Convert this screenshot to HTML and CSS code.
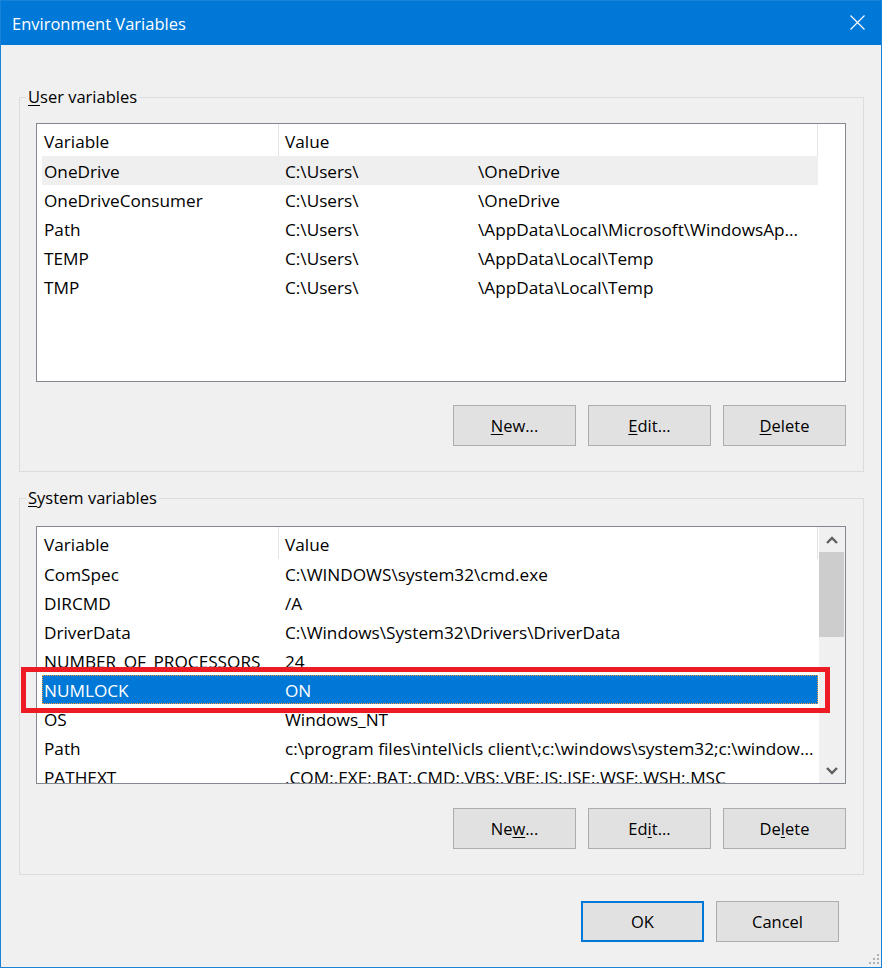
FILE: index.html
```html
<!DOCTYPE html>
<html>
<head>
<meta charset="utf-8">
<title>Environment Variables</title>
<link rel="stylesheet" href="styles.css">
</head>
<body>
<div class="window">
  <div class="titlebar">
    <span class="title">Environment Variables</span>
    <svg class="close" width="15" height="15" viewBox="0 0 15 15"><path d="M0.5 0.5 L14.5 14.5 M14.5 0.5 L0.5 14.5" stroke="#fff" stroke-width="1.1" fill="none"/></svg>
  </div>
  <div class="content">
    <fieldset class="group">
      <legend><u>U</u>ser variables</legend>
      <div class="list list-user">
        <div class="list-main">
          <div class="header">
            <div class="hcell h1">Variable</div>
            <div class="hcell h2">Value</div>
          </div>
          <div class="rows">
            <div class="row hover"><div class="c1">OneDrive</div><div class="c2"><span class="seg">C:\Users\</span>\OneDrive</div></div>
            <div class="row"><div class="c1">OneDriveConsumer</div><div class="c2"><span class="seg">C:\Users\</span>\OneDrive</div></div>
            <div class="row"><div class="c1">Path</div><div class="c2"><span class="seg">C:\Users\</span>\AppData\Local\Microsoft\WindowsAp...</div></div>
            <div class="row"><div class="c1">TEMP</div><div class="c2"><span class="seg">C:\Users\</span>\AppData\Local\Temp</div></div>
            <div class="row"><div class="c1">TMP</div><div class="c2"><span class="seg">C:\Users\</span>\AppData\Local\Temp</div></div>
          </div>
        </div>
      </div>
      <div class="buttons">
        <button class="btn"><u>N</u>ew...</button>
        <button class="btn"><u>E</u>dit...</button>
        <button class="btn"><u>D</u>elete</button>
      </div>
    </fieldset>

    <fieldset class="group group-sys">
      <legend><u>S</u>ystem variables</legend>
      <div class="list list-sys">
        <div class="list-main">
          <div class="header">
            <div class="hcell h1">Variable</div>
            <div class="hcell h2">Value</div>
          </div>
          <div class="rows">
            <div class="row"><div class="c1">ComSpec</div><div class="c2">C:\WINDOWS\system32\cmd.exe</div></div>
            <div class="row"><div class="c1">DIRCMD</div><div class="c2">/A</div></div>
            <div class="row"><div class="c1">DriverData</div><div class="c2">C:\Windows\System32\Drivers\DriverData</div></div>
            <div class="row"><div class="c1">NUMBER_OF_PROCESSORS</div><div class="c2">24</div></div>
            <div class="row selected"><div class="c1">NUMLOCK</div><div class="c2">ON</div></div>
            <div class="row"><div class="c1">OS</div><div class="c2">Windows_NT</div></div>
            <div class="row"><div class="c1">Path</div><div class="c2">c:\program files\intel\icls client\;c:\windows\system32;c:\window...</div></div>
            <div class="row"><div class="c1">PATHEXT</div><div class="c2">.COM;.EXE;.BAT;.CMD;.VBS;.VBE;.JS;.JSE;.WSF;.WSH;.MSC</div></div>
          </div>
        </div>
        <div class="scrollbar">
          <div class="sb-btn">
            <svg width="12" height="8" viewBox="0 0 12 8"><path d="M1 7 L6 2 L11 7" stroke="#606060" stroke-width="2.4" fill="none"/></svg>
          </div>
          <div class="sb-thumb"></div>
          <div class="sb-track"></div>
          <div class="sb-btn">
            <svg width="12" height="8" viewBox="0 0 12 8"><path d="M1 1 L6 6 L11 1" stroke="#606060" stroke-width="2.4" fill="none"/></svg>
          </div>
        </div>
      </div>
      <div class="buttons">
        <button class="btn">Ne<u>w</u>...</button>
        <button class="btn">Ed<u>i</u>t...</button>
        <button class="btn">De<u>l</u>ete</button>
      </div>
    </fieldset>

    <div class="dialog-buttons">
      <button class="btn btn-default">OK</button>
      <button class="btn">Cancel</button>
    </div>
  </div>
  <div class="highlight-box"></div>
  <svg class="grip" width="12" height="12" viewBox="0 0 12 12">
    <rect x="10" y="2" width="2" height="2" fill="#b0b0b0"/>
    <rect x="6" y="6" width="2" height="2" fill="#b0b0b0"/>
    <rect x="10" y="6" width="2" height="2" fill="#b0b0b0"/>
    <rect x="2" y="10" width="2" height="2" fill="#b0b0b0"/>
    <rect x="6" y="10" width="2" height="2" fill="#b0b0b0"/>
    <rect x="10" y="10" width="2" height="2" fill="#b0b0b0"/>
  </svg>
</div>
</body>
</html>
```
FILE: styles.css
```css
* { box-sizing: border-box; }

html, body {
  margin: 0;
  padding: 0;
  background: #f0f0f0;
}

body {
  font-family: "Open Sans", "Noto Sans", "Liberation Sans", sans-serif;
  font-size: 16px;
  color: #000;
}

.window {
  position: relative;
  width: 882px;
  height: 968px;
  border: 1px solid #1a83d6;
  background: #f0f0f0;
  display: flex;
  flex-direction: column;
}

.titlebar {
  height: 44px;
  background: #0078d7;
  display: flex;
  align-items: center;
  justify-content: space-between;
  padding: 0 16px 0 11px;
  flex: none;
}

.title {
  color: #fff;
  font-size: 16.5px;
  line-height: 20px;
  margin-top: 1px;
}

.close {
  display: block;
  margin-top: -1px;
}

.content {
  display: flex;
  flex-direction: column;
  padding: 41px 17px 0 18px;
}

.group {
  margin: 0;
  padding: 0 17px 25px 16px;
  border: 1px solid #dcdcdc;
  min-width: 0;
}

.group-sys {
  margin-top: 15px;
}

.group legend {
  font-size: 16.5px;
  line-height: 22px;
  padding: 0 2px;
  margin-left: -10px;
}

u {
  text-decoration: underline;
  text-underline-offset: 2px;
  text-decoration-thickness: 1px;
}

.list {
  margin-top: 15px;
  border: 1px solid #828790;
  background: #fff;
  display: flex;
  overflow: hidden;
  font-size: 17.2px;
}

.list-user { height: 259px; }
.list-sys { height: 258px; margin-top: 17px; }

.list-main {
  flex: 1;
  overflow: hidden;
  min-width: 0;
}

.header {
  display: flex;
  height: 32px;
  width: 781px;
}

.hcell {
  display: flex;
  align-items: center;
  border-right: 1px solid #e5e5e5;
  white-space: nowrap;
  padding-top: 2px;
}

.h1 { width: 242px; padding-left: 7px; }
.h2 { width: 539px; padding-left: 6px; }

.rows {
  padding-left: 5px;
}

.row {
  display: flex;
  height: 29px;
  width: 776px;
  align-items: center;
  white-space: nowrap;
  padding-top: 1px;
}

.row.hover { background: #efefef; }

.row.selected {
  background: #0078d7;
  color: #fff;
  outline: 1px dotted #f39a3c;
  outline-offset: -1px;
}

.c1 { width: 236px; padding-left: 2px; flex: none; overflow: hidden; }
.c2 { flex: 1; padding-left: 7px; overflow: hidden; }

.seg { display: inline-block; width: 193px; }

.scrollbar {
  width: 26px;
  flex: none;
  background: #f0f0f0;
  display: flex;
  flex-direction: column;
}

.sb-btn {
  height: 25px;
  display: flex;
  align-items: center;
  justify-content: center;
  flex: none;
  padding-right: 1px;
}

.sb-thumb {
  height: 85px;
  background: #cdcdcd;
  margin-right: 1px;
  flex: none;
}

.sb-track { flex: 1; }

.buttons {
  display: flex;
  justify-content: flex-end;
  gap: 12px;
  margin-top: 23px;
}

.group-sys .buttons { margin-top: 24px; }

.btn {
  width: 123px;
  height: 41px;
  background: #e1e1e1;
  border: 1px solid #adadad;
  font-family: inherit;
  font-size: 16.5px;
  color: #000;
  padding: 0;
  margin: 0;
}

.btn-default {
  border: 2px solid #0078d7;
}

.dialog-buttons {
  display: flex;
  justify-content: flex-end;
  gap: 12px;
  margin-top: 26px;
  padding-right: 25px;
}

.highlight-box {
  position: absolute;
  left: 20px;
  top: 666px;
  width: 809px;
  height: 46px;
  border: 5px solid #ed1c24;
}

.grip {
  position: absolute;
  right: 2px;
  bottom: 3px;
}
```
